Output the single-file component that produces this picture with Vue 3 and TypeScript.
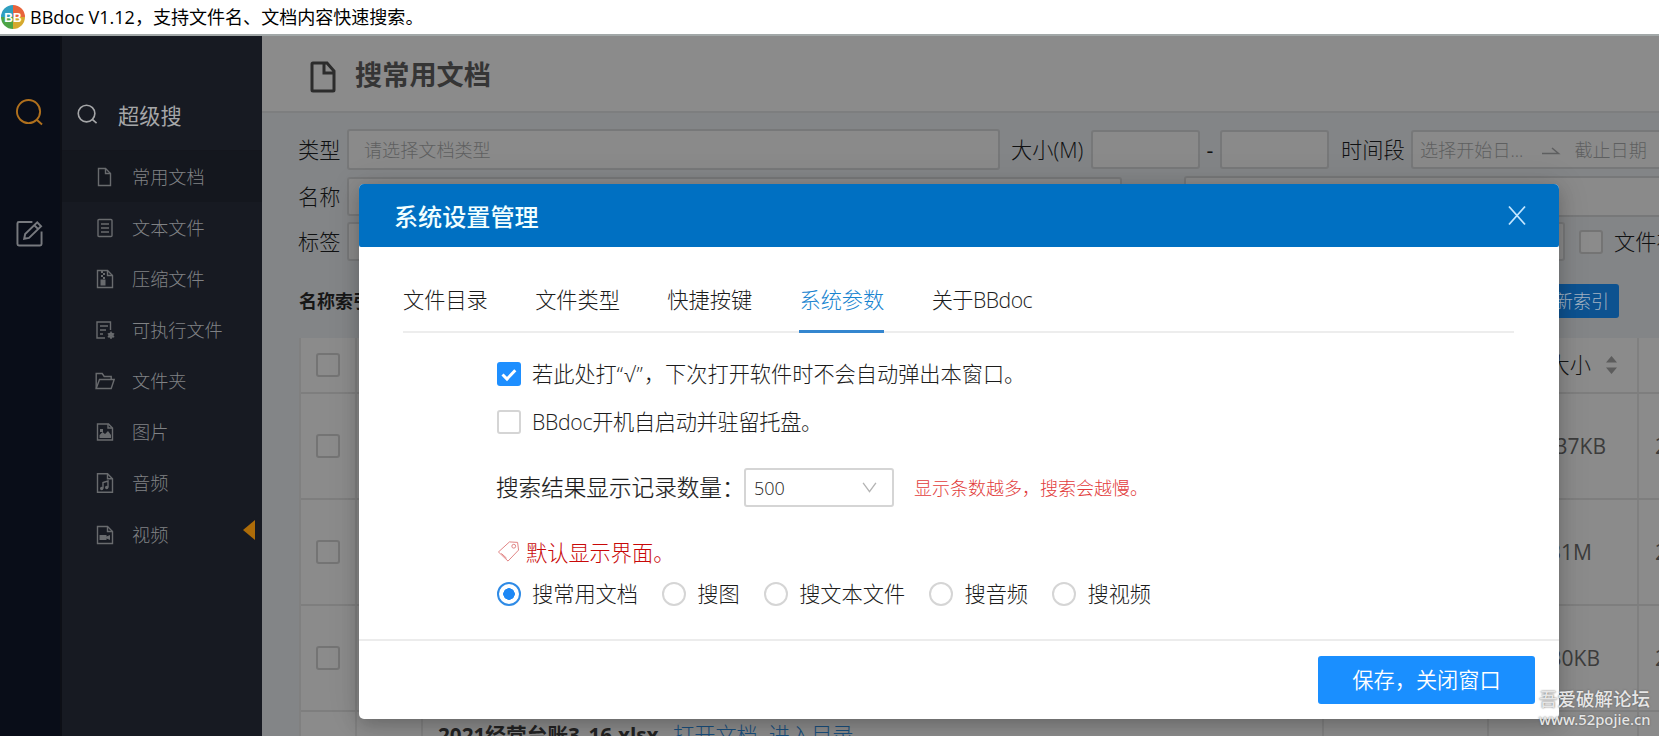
<script setup lang="ts">
import { ref } from 'vue'

interface MenuItem {
  label: string
  lines: string[]
  fills?: string[]
}

const menu: MenuItem[] = [
  { label: '常用文档', lines: ['M3.5 1.5h7l5 5v12h-12z', 'M10.5 1.5v5h5'] },
  { label: '文本文件', lines: ['M4 1.5h12q1 0 1 1v15q0 1-1 1H4q-1 0-1-1v-15q0-1 1-1z', 'M6 6h8M6 10h8M6 14h8'] },
  { label: '压缩文件', lines: ['M2.5 1.5h10l5 5v12h-15z', 'M12.5 1.5v5h5'], fills: ['M6 2h2v2H6zM8 4h2v2H8zM6 6h2v2H6zM8 8h2v2H8zM5.500 10.500h5v6h-5z'] },
  { label: '可执行文件', lines: ['M15.500 10V2H2v16h8', 'M5 6h8M5 10h6M5 14h3', 'M16 11.500v7.500M12.800 13.500l6.400 3.600M12.800 17.100l6.400-3.600', 'M14 15.300a2 2 0 1 0 4 0a2 2 0 1 0-4 0'] },
  { label: '文件夹', lines: ['M1.200 17.500V2.500h6l2 3h7v3', 'M1.200 17.500h15l3-9H4.500z'] },
  { label: '图片', lines: ['M2.500 2h11l4 4v12h-15z', 'M13 2v4h4'], fills: ['M4.500 16v-3l3-3 2.500 2 3-3 3 4v3zM5 7h3v3H5z'] },
  { label: '音频', lines: ['M2.500 .8h10l5 5v13.500h-15z', 'M12.500 .8v5h5', 'M8 15.500V9.500l5-1.500v6.500'], fills: ['M5 15.500a1.700 1.700 0 1 0 3.400 0a1.700 1.700 0 1 0-3.400 0M10 14.500a1.700 1.700 0 1 0 3.400 0a1.700 1.700 0 1 0-3.400 0'] },
  { label: '视频', lines: ['M2.500 1.500h10l5 5v12h-15z', 'M12.500 1.500v5h5'], fills: ['M4.500 10h7v1.500l3.500-1.500v5l-3.500-1.500V15h-7z'] },
]

const rows = [
  { name: '', size: '13.37KB' },
  { name: '', size: '0.31M' },
  { name: '', size: '5.30KB' },
  { name: '2021经营台账3_16.xlsx', size: '' },
]

const tabs = ['文件目录', '文件类型', '快捷按键', '系统参数', '关于BBdoc']
const activeTab = ref('系统参数')
const screens = ['搜常用文档', '搜图', '搜文本文件', '搜音频', '搜视频']
const screen = ref('搜常用文档')
const skipPopup = ref(true)
const autoStart = ref(false)
</script>

<template>
  <div class="window">
    <header class="titlebar">
      <svg class="logo" viewBox="0 0 24 24">
        <path d="M12 12V0A12 12 0 0 0 0 12z" fill="#2f9fc0" />
        <path d="M12 12V0A12 12 0 0 1 24 12z" fill="#e8643c" />
        <path d="M12 12H0A12 12 0 0 0 12 24z" fill="#4da446" />
        <path d="M12 12H24A12 12 0 0 1 12 24z" fill="#d5a92f" />
        <text x="12" y="16.500" text-anchor="middle">BB</text>
      </svg>
      <span>BBdoc V1.12，支持文件名、文档内容快速搜索。</span>
    </header>

    <div class="body">
      <nav class="rail">
        <svg class="rail-search" viewBox="0 0 28 28"><circle cx="13" cy="13" r="12" /><path d="M21.500 21.500l5.500 5" /></svg>
        <svg class="rail-edit" viewBox="0 0 28 28">
          <path d="M17 2H3Q1.500 2 1.500 3.500V25Q1.500 26.500 3 26.500H25Q26.500 26.500 26.500 25V12" />
          <path d="M8.500 19.500l1-5L22 2.500l4 4L13.500 18.500zM19 5.500l4 4" />
        </svg>
      </nav>

      <aside class="side">
        <div class="side-head">
          <svg viewBox="0 0 22 22"><circle cx="10" cy="10" r="8.700" /><path d="M16 16l4.500 4" /></svg>
          <span>超级搜</span>
        </div>
        <ul class="menu">
          <li v-for="(m, i) in menu" :key="m.label" :class="{ on: i === 0 }">
            <svg viewBox="0 0 20 20">
              <path v-for="l in m.lines" :key="l" :d="l" class="ln" />
              <path v-for="f in m.fills" :key="f" :d="f" class="fl" />
            </svg>
            <span>{{ m.label }}</span>
          </li>
        </ul>
        <i class="collapse"></i>
      </aside>

      <main class="main">
        <div class="page-head">
          <svg viewBox="0 0 26 32"><path d="M3 2h14l7 8v19q0 1-1 1H3q-1 0-1-1V3q0-1 1-1zM14 2v10h10" /></svg>
          <h1>搜常用文档</h1>
        </div>

        <div class="filter f1">
          <label>类型</label>
          <div class="inp type">请选择文档类型</div>
          <label class="size-label">大小(M)</label>
          <div class="inp num"></div>
          <span class="dash">-</span>
          <div class="inp num"></div>
          <label class="time-label">时间段</label>
          <div class="inp range">
            <span>选择开始日...</span>
            <svg viewBox="0 0 18 10"><path d="M0 8.500h16.500L10 3" /></svg>
            <span>截止日期</span>
          </div>
        </div>
        <div class="filter f2">
          <label>名称</label>
          <div class="inp name"></div>
          <div class="inp second"></div>
        </div>
        <div class="filter f3">
          <label>标签</label>
          <div class="inp tag"></div>
          <i class="box"></i>
          <span class="exist">文件存在</span>
        </div>
        <div class="tools">
          <b>名称索引</b>
          <button>更新索引</button>
        </div>

        <div class="table">
          <div class="tr th">
            <div class="td pick"><i class="box"></i></div>
            <div class="td"></div>
            <div class="td"></div>
            <div class="td"></div>
            <div class="td size">大小
              <svg viewBox="0 0 11 18"><path d="M5.500 0l5.500 6.500H0zM5.500 18l5.500-6.500H0z" /></svg>
            </div>
            <div class="td"></div>
          </div>
          <div v-for="r in rows" :key="r.size" class="tr">
            <div class="td pick"><i class="box"></i></div>
            <div class="td"></div>
            <div class="td doc"><template v-if="r.name"><b>{{ r.name }}</b><a>打开文档</a><a>进入目录</a></template></div>
            <div class="td"></div>
            <div class="td size">{{ r.size }}</div>
            <div class="td date"><template v-if="r.size">2</template></div>
          </div>
        </div>
      </main>
    </div>

    <section class="modal">
      <header class="modal-head">
        <h2>系统设置管理</h2>
        <svg viewBox="0 0 18 19"><path d="M1 .5l16 18M17 .5L1 18.500" /></svg>
      </header>
      <div class="modal-body">
        <div class="tabs">
          <div v-for="t in tabs" :key="t" class="tab" :class="{ active: t === activeTab }" @click="activeTab = t">{{ t }}</div>
        </div>
        <div class="form">
          <div class="line c1" @click="skipPopup = !skipPopup">
            <i class="check" :class="{ checked: skipPopup }"><svg v-if="skipPopup" viewBox="0 0 24 24"><path d="M5.500 12.500l4.500 4.500 8.300-8.700" /></svg></i>
            <span>若此处打<q>“√”</q>，下次打开软件时不会自动弹出本窗口。</span>
          </div>
          <div class="line c2" @click="autoStart = !autoStart">
            <i class="check" :class="{ checked: autoStart }"></i>
            <span class="auto">BBdoc开机自启动并驻留托盘。</span>
          </div>
          <div class="line count">
            <span class="count-label">搜索结果显示记录数量：</span>
            <div class="select">500<svg viewBox="0 0 16 12"><path d="M1 1l7 9.500L15 1" /></svg></div>
            <span class="hint">显示条数越多，搜索会越慢。</span>
          </div>
          <div class="line default">
            <svg viewBox="0 0 24 24"><path d="M1.500 12.500L13 2l8.500 .5 1 8L11.500 22zM4.500 14l5.500 5" /><circle cx="17.500" cy="6.500" r="2" /></svg>
            <span>默认显示界面。</span>
          </div>
          <div class="line radios">
            <div v-for="s in screens" :key="s" class="radio" @click="screen = s">
              <i :class="{ picked: s === screen }"></i><span>{{ s }}</span>
            </div>
          </div>
        </div>
      </div>
      <footer class="modal-foot"><button>保存，关闭窗口</button></footer>
    </section>

    <div class="watermark"><div>吾爱破解论坛</div><div class="site">www.52pojie.cn</div></div>
  </div>
</template>

<style>
body { margin: 0; overflow: hidden; }
</style>

<style scoped>
* { box-sizing: border-box; }
.window {
  position: relative; width: 1659px; height: 736px; overflow: hidden;
  font-family: "Open Sans", "Noto Sans CJK SC", sans-serif; font-weight: 300;
  font-size: 21.200px; line-height: 30px; color: #1c1c1c; white-space: nowrap;
}
svg { display: block; flex: none; fill: none; overflow: visible; }
button { border: 0; font: inherit; padding: 0; }
h1, h2, ul { margin: 0; padding: 0; list-style: none; }
i { display: block; flex: none; }
b { font-weight: 700; }

.titlebar { height: 36px; display: flex; align-items: center; background: #fff; border-bottom: 2px solid #a2a8a8; font-size: 18.050px; font-weight: 400; color: #000; }
.logo { width: 24px; height: 24px; margin: 0 5px 0 1px; }
.logo text { font: 700 12px "Liberation Sans", sans-serif; fill: #fff; }

.body { display: flex; height: 700px; }
.rail { width: 62px; flex: none; background: #090d18; border-right: 2px solid #0d0f16; }
.rail svg { width: 27px; height: 27px; margin-left: 16px; stroke-width: 2; }
.rail-search { margin-top: 63px; stroke: #b0701d; }
.rail-edit { margin-top: 94px; stroke: #77797e; }

.side { position: relative; width: 200px; flex: none; background: #171a22; }
.side-head { height: 115px; padding: 46px 0 0 15px; display: flex; align-items: center; color: #a5a6a8; font-weight: 400; border-bottom: 1px solid #14161d; }
.side-head svg { width: 21px; height: 21px; margin: -3px 20px 0 0; stroke: #a5a6a8; stroke-width: 1.700; }
.menu li { height: 51.150px; display: flex; align-items: center; padding-left: 33px; font-size: 18.150px; color: #808285; }
.menu li.on { background: #14171e; }
.menu svg { width: 20px; height: 20px; margin-right: 17px; }
.ln { stroke: #696b6e; stroke-width: 1.400; }
.fl { fill: #696b6e; }
.collapse { position: absolute; left: 181px; top: 484px; border: 10px solid transparent; border-left: 0; border-right: 12px solid #ad6c09; }

.main { flex: 1; min-width: 0; overflow: hidden; background: #838587; color: #101112; }
.page-head { height: 77px; background: #8b8b8b; border-bottom: 2px solid #7d7e7f; display: flex; align-items: center; padding-left: 48px; }
.page-head svg { width: 26px; height: 32px; margin: 7px 19px 0 0; stroke: #2c2c2c; stroke-width: 3; }
.page-head h1 { font-size: 27.200px; font-weight: 700; color: #353535; line-height: 40px; margin-top: 3px; }

.filter { display: flex; align-items: center; padding-left: 36px; }
.filter label { width: 49px; flex: none; }
.inp { height: 39px; flex: none; border: 2px solid #777879; border-radius: 3px; background: #8a8a8a; font-size: 18.100px; color: #5e5f60; display: flex; align-items: center; }
.f1 { height: 41px; margin-top: 16px; }
.inp.type { width: 653px; height: 41px; padding-left: 15px; }
.filter .size-label { margin-left: 11px; width: 80px; }
.filter .time-label { margin-left: 12px; width: 70px; }
.num { width: 109px; }
.dash { width: 20px; flex: none; text-align: center; font-weight: 400; }
.range { width: 300px; padding-left: 7px; }
.range svg { width: 18px; height: 10px; margin: 0 14px 0 19px; stroke: #5e5f60; stroke-width: 1.500; }
.f2 { height: 41px; margin-top: 6px; }
.inp.name { width: 775px; }
.inp.second { width: 500px; height: 41px; margin-left: 62px; }
.f3 { height: 39px; margin-top: 5px; }
.inp.tag { width: 1218px; margin-right: 14px; }
.box { width: 24px; height: 24px; border: 2px solid #747474; border-radius: 3px; background: #8b8b8b; }
.exist { margin-left: 11px; }
.tools { height: 34px; margin: 23px 0 20px; padding-left: 37px; display: flex; align-items: center; font-size: 18px; }
.tools b { flex: 1; color: #171717; }
.tools button { width: 100px; height: 34px; padding-left: 8px; margin-right: 40px; background: #0d5290; color: #a3b3c3; border-radius: 3px; }

.table { margin-left: 37px; width: 1500px; border-left: 2px solid #808080; background: #8b8b8b; }
.tr { display: grid; grid-template-columns: 56px 66px 901px 165px 150px 162px; height: 106px; border-bottom: 2px solid #7e7e7e; }
.tr.th { height: 56px; }
.td { display: flex; align-items: center; border-right: 2px solid #808080; overflow: hidden; }
.pick { justify-content: center; }
.size { justify-content: flex-end; padding-right: 31px; color: #3c3c3c; font-size: 21px; font-weight: 400; }
.tr:nth-child(3) .size { padding-right: 45px; }
.tr:nth-child(4) .size { padding-right: 37px; }
.th .size { padding-right: 20px; color: #141414; font-size: 21.200px; font-weight: 300; }
.size svg { width: 11px; height: 18px; margin-left: 15px; fill: #5c5c5c; }
.date { padding-left: 16px; color: #3c3c3c; font-weight: 400; }
.doc { align-items: flex-start; padding: 8px 0 0 15px; color: #222; }
.doc b { width: 235px; font-size: 20.700px; }
.doc a { margin-right: 11px; color: #194e7c; }

.modal { position: absolute; left: 359px; top: 184px; width: 1200px; height: 535px; border-radius: 5px; background: #fff; overflow: visible; box-shadow: 0 6px 18px rgba(0, 0, 0, .2), 0 0 34px rgba(0, 0, 0, .1); }
.modal-head { height: 63px; padding: 0 33px 0 35px; display: flex; align-items: center; justify-content: space-between; background: #0070c2; border-radius: 5px 5px 2px 2px; color: #f2ffff; }
.modal-head h2 { font-size: 24.100px; font-weight: 500; line-height: 34px; margin-top: 3px; }
.modal-head svg { width: 18px; height: 19px; stroke: #c3e6ff; stroke-width: 1.800; }
.modal-body { height: 392px; padding: 29px 45px 0 44px; }
.tabs { height: 57px; display: flex; gap: 47.400px; border-bottom: 2px solid #ededed; }
.tab { height: 57px; padding-top: 9px; }
.tab:last-child { letter-spacing: -.5px; }
.tab.active { color: #1884d0; border-bottom: 3px solid #3486cf; }
.form { padding: 28px 0 0 93px; }
.line { display: flex; align-items: center; height: 26px; }
.check { width: 24px; height: 24px; margin: 0 11px 0 1px; border: 2px solid #d5d5d5; border-radius: 3px; }
.check.checked { background: #1e8fff; border: 0; }
.check svg { stroke: #fff; stroke-width: 3; }
q { quotes: none; font-family: "Open Sans", sans-serif; font-size: 21px; letter-spacing: 1px; }
.c2 { margin-top: 22px; }
.auto { letter-spacing: -.3px; }
.count { margin-top: 33px; height: 39px; }
.count-label { width: 248px; font-size: 22.600px; font-weight: 300; -webkit-text-stroke: .2px #1c1c1c; }
.select { width: 150px; height: 39px; padding: 0 15px 0 8px; display: flex; align-items: center; justify-content: space-between; border: 2px solid #d5d5d5; border-radius: 3px; font-size: 18px; }
.select svg { width: 15px; height: 11px; stroke: #b4b4b4; stroke-width: 1.500; }
.hint { margin-left: 20px; font-size: 18px; color: #e23c3c; }
.default { margin-top: 33px; color: #c80808; }
.default svg { width: 23px; height: 23px; margin: -4px 6px 0 1px; stroke: #e08080; stroke-width: 1; }
.radios { margin-top: 15px; gap: 23.400px; }
.radio { display: flex; align-items: center; }
.radio i { width: 24px; height: 24px; margin: 0 11px 0 1px; border: 2px solid #d5d5d5; border-radius: 50%; }
.radio i.picked { border-color: #2f8be6; background: radial-gradient(circle, #1e88f5 5.500px, #fff 6px); }
.modal-foot { height: 80px; border-top: 2px solid #ececec; display: flex; justify-content: flex-end; padding: 15px 24px 0 0; }
.modal-foot button { width: 217px; height: 48px; background: #1a8fff; color: #fff; border-radius: 3px; font-weight: 350; }

.watermark { position: absolute; left: 1539px; top: 688px; font-size: 18.500px; line-height: 21px; font-weight: 500; color: #e6e6e6; text-shadow: 0 0 2px #555; }
.site { font: 500 14.800px/20px "Noto Sans", sans-serif; }
</style>
